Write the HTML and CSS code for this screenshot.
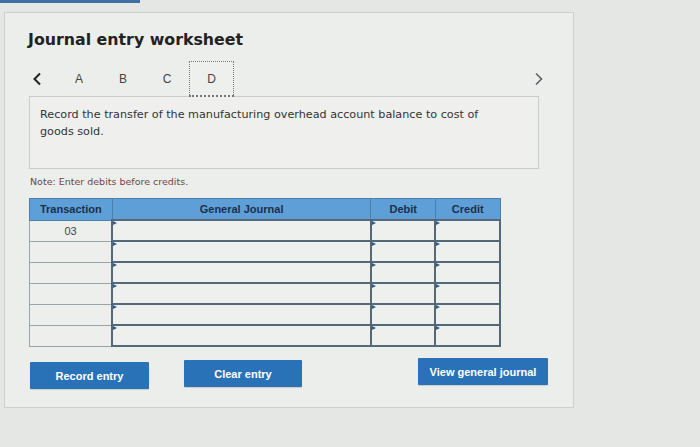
FILE: index.html
```html
<!DOCTYPE html>
<html>
<head>
<meta charset="utf-8">
<link rel="stylesheet" href="styles.css">
</head>
<body>
<div class="topbar"></div>
<div class="panel">
  <h1 class="title">Journal entry worksheet</h1>
  <div class="nav">
    <span class="chev">
      <svg width="10" height="14" viewBox="0 0 10 14"><path d="M8 1.5 L2.5 7 L8 12.5" fill="none" stroke="#222" stroke-width="2"/></svg>
    </span>
    <span class="tab">A</span>
    <span class="tab">B</span>
    <span class="tab">C</span>
    <span class="tab active">D</span>
    <span class="spacer"></span>
    <span class="chev right">
      <svg width="10" height="14" viewBox="0 0 10 14"><path d="M2 1.5 L7.5 7 L2 12.5" fill="none" stroke="#5a6066" stroke-width="1.6"/></svg>
    </span>
  </div>
  <div class="desc">Record the transfer of the manufacturing overhead account balance to cost of goods sold.</div>
  <p class="note">Note: Enter debits before credits.</p>
  <table class="journal">
    <thead>
      <tr><th class="c-tr">Transaction</th><th class="c-gj">General Journal</th><th class="c-dr">Debit</th><th class="c-cr">Credit</th></tr>
    </thead>
    <tbody>
      <tr><td class="tr">03</td><td class="in"></td><td class="in"></td><td class="in"></td></tr>
      <tr><td class="tr"></td><td class="in"></td><td class="in"></td><td class="in"></td></tr>
      <tr><td class="tr"></td><td class="in"></td><td class="in"></td><td class="in"></td></tr>
      <tr><td class="tr"></td><td class="in"></td><td class="in"></td><td class="in"></td></tr>
      <tr><td class="tr"></td><td class="in"></td><td class="in"></td><td class="in"></td></tr>
      <tr><td class="tr"></td><td class="in"></td><td class="in"></td><td class="in"></td></tr>
    </tbody>
  </table>
  <div class="buttons">
    <button class="btn b-record">Record entry</button>
    <button class="btn b-clear">Clear entry</button>
    <button class="btn b-view">View general journal</button>
  </div>
</div>
</body>
</html>
```
FILE: styles.css
```css
html, body {
  margin: 0;
  padding: 0;
}
body {
  width: 700px;
  height: 447px;
  overflow: hidden;
  background: #e4e7e3;
  font-family: "DejaVu Sans", Verdana, sans-serif;
  color: #333;
}
.topbar {
  width: 140px;
  height: 3px;
  background: #3f6fa6;
}
.panel {
  box-sizing: border-box;
  margin: 9px 0 0 4px;
  width: 570px;
  height: 396px;
  border: 1px solid #cdd1ce;
  background: #eceeeb;
  padding: 0 0 0 24px;
}
.title {
  margin: 17px 0 0 -1px;
  font-size: 15.8px;
  font-weight: bold;
  color: #222;
  line-height: 20px;
  height: 20px;
}
.nav {
  display: flex;
  align-items: stretch;
  height: 36px;
  margin-top: 11px;
  width: 520px;
}
.chev {
  width: 28px;
  display: flex;
  align-items: center;
  justify-content: flex-start;
  padding-left: 3px;
  box-sizing: border-box;
}
.chev.right {
  width: 20px;
  padding-left: 0;
  justify-content: center;
}
.spacer { flex: 1; }
.tab {
  width: 44px;
  display: flex;
  align-items: center;
  justify-content: center;
  font-family: "Liberation Sans", Arial, sans-serif;
  font-size: 12px;
  color: #444;
}
.tab.active {
  box-sizing: border-box;
  width: 45px;
  border: 1px dotted #777;
  border-bottom: 2px dotted #777;
  background: #eef0ed;
  position: relative;
  z-index: 1;
}
.desc {
  box-sizing: border-box;
  margin-top: -1px;
  width: 510px;
  height: 73px;
  border: 1px solid #c9ccc9;
  background: #eff0ee;
  padding: 9px 48px 0 10px;
  font-size: 11.2px;
  line-height: 17px;
  color: #333;
}
.note {
  margin: 7px 0 0 1px;
  font-size: 9.5px;
  line-height: 12px;
  color: #6e4646;
}
.journal {
  margin-top: 10px;
  border-collapse: collapse;
  width: 472px;
  font-family: "Liberation Sans", Arial, sans-serif;
}
.journal th {
  background: #5e9fd8;
  color: #1c2f4a;
  font-size: 11px;
  font-weight: bold;
  height: 20px;
  padding: 0;
  border: 1px solid #4a7fb0;
}
.c-tr { width: 82px; }
.c-gj { width: 261px; }
.c-dr { width: 64px; }
.c-cr { width: 64px; }
.journal td {
  height: 19px;
  padding: 0;
}
.journal td.tr {
  border: 1px solid #9aa3a8;
  text-align: center;
  font-size: 11px;
  color: #444;
  background: #edefec;
  vertical-align: top;
  padding-top: 4px;
  height: 15px;
}
.journal td.in {
  border: 2px solid #55687a;
  background: #eef0ed;
  position: relative;
}
.journal td.in::before {
  content: "";
  position: absolute;
  left: 0;
  top: 0;
  border-left: 4px solid #2f5b85;
  border-top: 2.5px solid transparent;
  border-bottom: 2.5px solid transparent;
}
.buttons {
  display: flex;
  align-items: flex-start;
  margin-top: 11px;
  margin-left: 1px;
}
.btn {
  box-sizing: border-box;
  height: 27px;
  border: none;
  border-radius: 1px;
  background: #2a72b8;
  color: #fff;
  font-family: "Liberation Sans", Arial, sans-serif;
  font-size: 11px;
  font-weight: bold;
  padding: 0;
  box-shadow: 0 1px 1px rgba(0,0,0,0.15);
}
.b-record { width: 119px; margin-top: 4px; }
.b-clear { width: 118px; margin-left: 35px; margin-top: 2px; }
.b-view { width: 130px; margin-left: 116px; margin-top: 0; }
```
